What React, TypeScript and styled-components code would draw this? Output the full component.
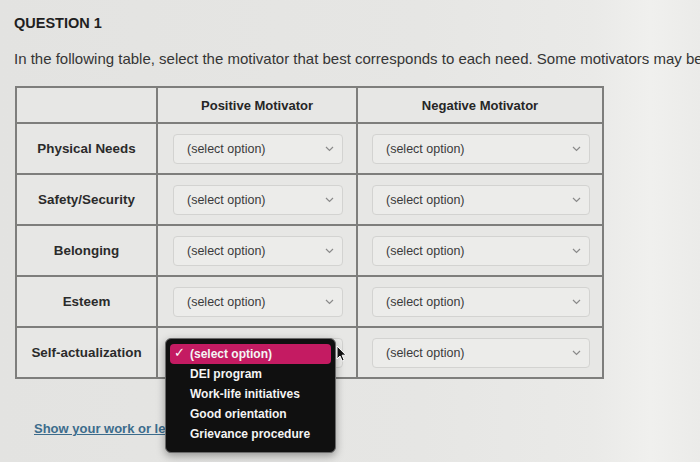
import { FC } from "react";
import styled, { createGlobalStyle } from "styled-components";

const GlobalStyle = createGlobalStyle`
  html, body {
    margin: 0;
    padding: 0;
    width: 700px;
    height: 462px;
    overflow: hidden;
  }
  body {
    font-family: "Liberation Sans", Arial, sans-serif;
    background: linear-gradient(90deg, #e3e3e1 0%, #e6e6e4 60%, #eaeae8 85%, #f0f0ee 93%, #ebebe9 100%);
    color: #2a2a2a;
  }
`;

const Page = styled.div`
  padding: 15px 0 0 14px;
  width: 686px;
  height: 447px;
  overflow: hidden;
`;

const Title = styled.div`
  font-size: 14.5px;
  line-height: 17px;
  font-weight: 700;
  color: #1f1f1f;
`;

const Prompt = styled.div`
  margin-top: 18px;
  font-size: 15px;
  line-height: 18px;
  color: #353535;
  white-space: nowrap;
`;

const Grid = styled.div`
  margin: 18px 0 0 1px;
  display: grid;
  grid-template-columns: 139px 198px 244px;
  grid-template-rows: 34px repeat(5, 49px);
  gap: 2px;
  padding: 2px;
  width: max-content;
  background: #7e7e7c;
`;

const Cell = styled.div<{ $align?: "center" | "start" }>`
  background: #e7e7e5;
  display: flex;
  align-items: center;
  justify-content: ${({ $align }) => ($align === "start" ? "flex-start" : "center")};
  position: relative;
`;

const HeadText = styled.span`
  font-size: 13px;
  font-weight: 700;
  color: #262626;
`;

const Label = styled.span`
  font-size: 13.4px;
  font-weight: 700;
  color: #2b2b2b;
`;

const SelectBox = styled.div<{ $w: number; $left: number }>`
  box-sizing: border-box;
  margin-left: ${({ $left }) => $left}px;
  width: ${({ $w }) => $w}px;
  height: 30px;
  border: 1px solid #d3d3d1;
  border-radius: 4px;
  background: #ececea;
  display: flex;
  align-items: center;
  justify-content: space-between;
  padding: 0 8px 0 13px;
  font-size: 12.5px;
  color: #3a3a3a;
`;

const Chevron: FC = () => (
  <svg width="9" height="6" viewBox="0 0 9 6">
    <path d="M1 1l3.5 3.5L8 1" fill="none" stroke="#8a8a8a" strokeWidth="1.2" />
  </svg>
);

const Menu = styled.div`
  position: absolute;
  left: 7px;
  top: 10px;
  z-index: 5;
  box-sizing: border-box;
  width: 171px;
  height: 115px;
  padding: 5px 4px;
  background: #101010;
  border: 1px solid #6a6a6a;
  border-radius: 6px;
  box-shadow: 0 3px 8px rgba(0, 0, 0, 0.35);
  display: flex;
  flex-direction: column;
`;

const MenuItem = styled.div<{ $active?: boolean }>`
  height: 20px;
  display: flex;
  align-items: center;
  padding-left: 20px;
  border-radius: 4px;
  font-size: 12px;
  font-weight: 700;
  color: #f4f4f4;
  position: relative;
  background: ${({ $active }) => ($active ? "#c41b62" : "transparent")};
`;

const Check = styled.span`
  position: absolute;
  left: 4px;
  top: 1px;
  font-family: "DejaVu Sans", sans-serif;
  font-size: 13px;
  font-weight: 700;
  color: #ffffff;
`;

const Cursor = styled.svg`
  position: absolute;
  left: 178px;
  top: 17px;
  z-index: 6;
`;

const WorkLink = styled.a`
  display: inline-block;
  margin: 42px 0 0 20px;
  font-size: 13px;
  font-weight: 700;
  color: #3c6c8c;
  text-decoration: underline;
`;

const needs = ["Physical Needs", "Safety/Security", "Belonging", "Esteem", "Self-actualization"];
const options = ["DEI program", "Work-life initiatives", "Good orientation", "Grievance procedure"];

export default function App() {
  return (
    <>
      <GlobalStyle />
      <Page>
        <Title>QUESTION 1</Title>
        <Prompt>
          In the following table, select the motivator that best corresponds to each need. Some motivators may be
        </Prompt>
        <Grid>
          <Cell />
          <Cell>
            <HeadText>Positive Motivator</HeadText>
          </Cell>
          <Cell>
            <HeadText>Negative Motivator</HeadText>
          </Cell>
          {needs.map((need, i) => (
            <>
              <Cell key={need + "l"}>
                <Label>{need}</Label>
              </Cell>
              <Cell key={need + "p"} $align="start">
                <SelectBox $w={170} $left={15}>
                  <span>(select option)</span>
                  <Chevron />
                </SelectBox>
                {i === needs.length - 1 && (
                  <>
                    <Menu>
                      <MenuItem $active>
                        <Check>✓</Check>
                        (select option)
                      </MenuItem>
                      {options.map((o) => (
                        <MenuItem key={o}>{o}</MenuItem>
                      ))}
                    </Menu>
                    <Cursor width="11" height="17" viewBox="0 0 11 17">
                      <path
                        d="M1 1v13l3-3 2.2 5 2-0.9-2.1-4.9H10z"
                        fill="#111"
                        stroke="#fff"
                        strokeWidth="1"
                        strokeLinejoin="round"
                      />
                    </Cursor>
                  </>
                )}
              </Cell>
              <Cell key={need + "n"} $align="start">
                <SelectBox $w={218} $left={14}>
                  <span>(select option)</span>
                  <Chevron />
                </SelectBox>
              </Cell>
            </>
          ))}
        </Grid>
        <WorkLink>Show your work or leave a comment</WorkLink>
      </Page>
    </>
  );
}
